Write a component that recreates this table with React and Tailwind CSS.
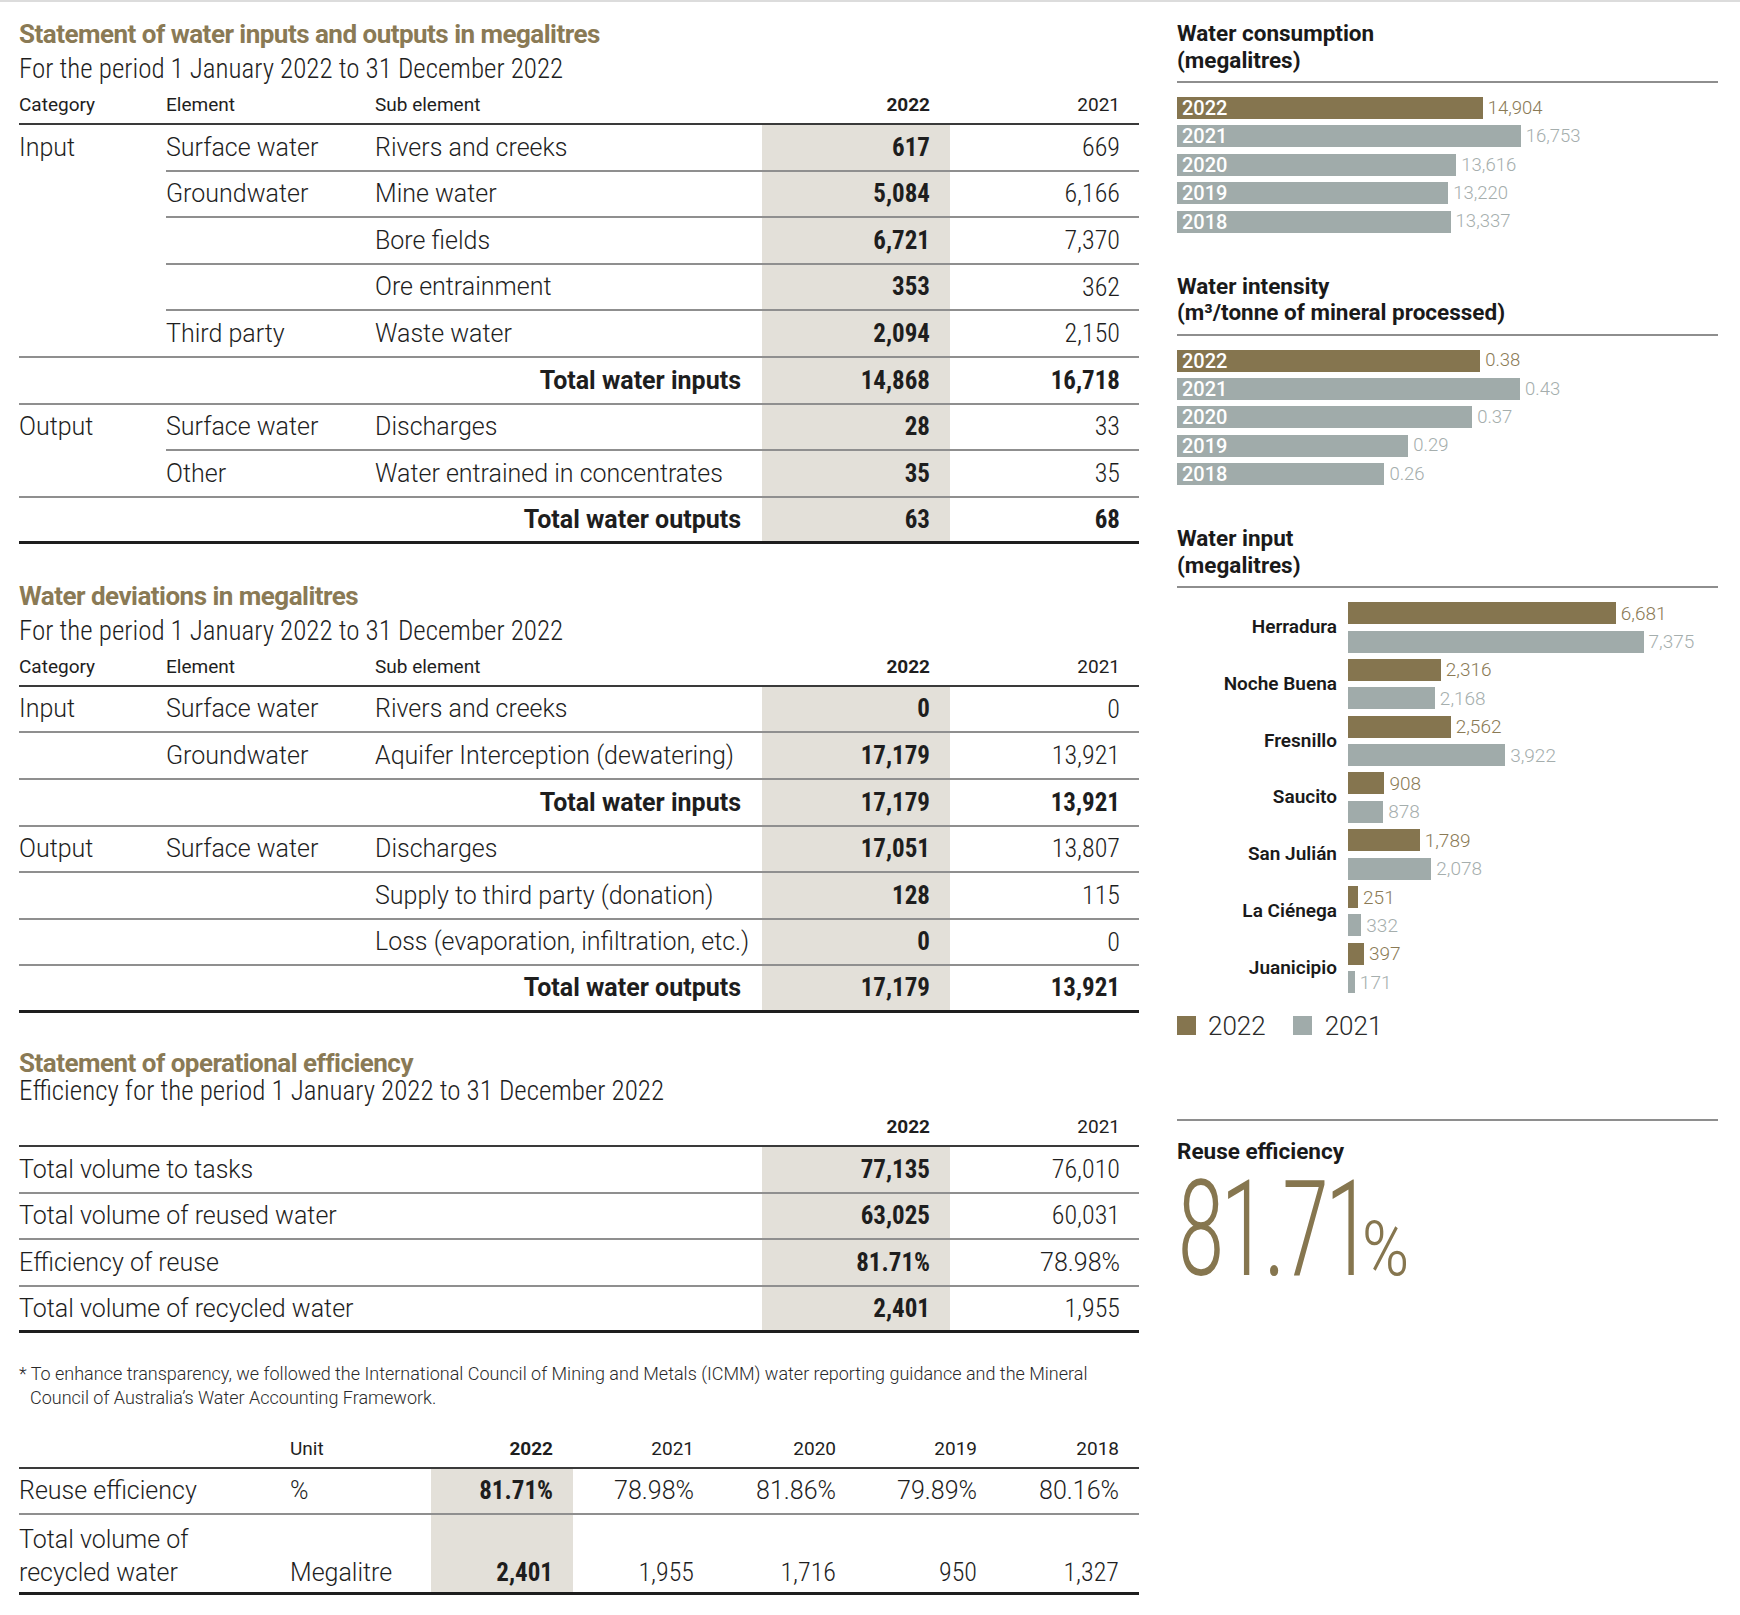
const flowRows = [
  { cat: "Input", el: "Surface water", sub: "Rivers and creeks", a: "617", b: "669", line: "part" },
  { el: "Groundwater", sub: "Mine water", a: "5,084", b: "6,166", line: "part" },
  { sub: "Bore fields", a: "6,721", b: "7,370", line: "part" },
  { sub: "Ore entrainment", a: "353", b: "362", line: "part" },
  { el: "Third party", sub: "Waste water", a: "2,094", b: "2,150", line: "full" },
  { total: "Total water inputs", a: "14,868", b: "16,718", line: "full" },
  { cat: "Output", el: "Surface water", sub: "Discharges", a: "28", b: "33", line: "part" },
  { el: "Other", sub: "Water entrained in concentrates", a: "35", b: "35", line: "full" },
  { total: "Total water outputs", a: "63", b: "68", line: "end" },
];

const deviationRows = [
  { cat: "Input", el: "Surface water", sub: "Rivers and creeks", a: "0", b: "0", line: "full" },
  { el: "Groundwater", sub: "Aquifer Interception (dewatering)", a: "17,179", b: "13,921", line: "full" },
  { total: "Total water inputs", a: "17,179", b: "13,921", line: "full" },
  { cat: "Output", el: "Surface water", sub: "Discharges", a: "17,051", b: "13,807", line: "full" },
  { sub: "Supply to third party (donation)", a: "128", b: "115", line: "full" },
  { sub: "Loss (evaporation, infiltration, etc.)", a: "0", b: "0", line: "full" },
  { total: "Total water outputs", a: "17,179", b: "13,921", line: "end" },
];

const efficiencyRows = [
  ["Total volume to tasks", "77,135", "76,010"],
  ["Total volume of reused water", "63,025", "60,031"],
  ["Efficiency of reuse", "81.71%", "78.98%"],
  ["Total volume of recycled water", "2,401", "1,955", true],
];

const consumption = [
  { year: "2022", value: 14904, label: "14,904" },
  { year: "2021", value: 16753, label: "16,753" },
  { year: "2020", value: 13616, label: "13,616" },
  { year: "2019", value: 13220, label: "13,220" },
  { year: "2018", value: 13337, label: "13,337" },
];

const intensity = [
  { year: "2022", value: 0.38, label: "0.38" },
  { year: "2021", value: 0.43, label: "0.43" },
  { year: "2020", value: 0.37, label: "0.37" },
  { year: "2019", value: 0.29, label: "0.29" },
  { year: "2018", value: 0.26, label: "0.26" },
];

const sites = [
  ["Herradura", 6681, 7375],
  ["Noche Buena", 2316, 2168],
  ["Fresnillo", 2562, 3922],
  ["Saucito", 908, 878],
  ["San Julián", 1789, 2078],
  ["La Ciénega", 251, 332],
  ["Juanicipio", 397, 171],
];

const fmt = (n) => n.toLocaleString("en-US");

// light figures: digits look condensed, percentages keep normal width
const lightNum = (v) => (v.includes("%") ? "text-[25px] font-light" : "text-[26px] font-light font-stretch-semi-condensed");
const boldNum = "text-[25px] font-bold font-stretch-semi-condensed";

function SectionTitle({ title, sub, tight }) {
  return (
    <div>
      <div className={`${tight ? "leading-[28px]" : "leading-[30px]"} text-[26px] font-bold tracking-[-0.02em] text-[#8a7a55]`}>{title}</div>
      <div className={`${tight ? "leading-[28px]" : "mt-[5px] leading-[30px]"} text-[27px] font-light font-stretch-semi-condensed text-[#1e1e1e]`}>{sub}</div>
    </div>
  );
}

function FlowHead() {
  return (
    <div className="grid grid-cols-[147px_209px_387px_188px_189px] text-[19px] leading-[24px] text-[#1e1e1e]">
      <div className="h-[41px] flex items-end pb-[6px] border-b-2 border-[#3a3a3a]">Category</div>
      <div className="h-[41px] flex items-end pb-[6px] border-b-2 border-[#3a3a3a]">Element</div>
      <div className="h-[41px] flex items-end pb-[6px] border-b-2 border-[#3a3a3a]">Sub element</div>
      <div className="h-[41px] flex items-end justify-end pb-[6px] pr-[20px] font-bold border-b-2 border-[#3a3a3a]">2022</div>
      <div className="h-[41px] flex items-end justify-end pb-[6px] pr-[19px] border-b-2 border-[#3a3a3a]">2021</div>
    </div>
  );
}

function FlowRow({ r }) {
  const line = r.line === "end" ? "border-b-[3px] border-[#1e1e1e]" : "border-b-2 border-[#8f8f8f]";
  const catLine = r.line === "part" ? "border-b-2 border-transparent" : line;
  const cell = "h-[46.6px] flex items-center";
  return (
    <div className="grid grid-cols-[147px_209px_387px_188px_189px] text-[25px] text-[#1e1e1e]">
      {r.total ? (
        <div className={`${cell} ${line} col-span-3 justify-end pr-[21px] font-bold`}>{r.total}</div>
      ) : (
        <>
          <div className={`${cell} ${catLine} font-light`}>{r.cat}</div>
          <div className={`${cell} ${line} font-light`}>{r.el}</div>
          <div className={`${cell} ${line} font-light`}>{r.sub}</div>
        </>
      )}
      <div className={`${cell} ${line} justify-end pr-[20px] bg-[#e3e0d9] ${boldNum}`}>{r.a}</div>
      <div className={`${cell} ${line} justify-end pr-[19px] ${r.total ? boldNum : lightNum(r.b)}`}>{r.b}</div>
    </div>
  );
}

function YearBars({ rows, scale }) {
  return (
    <div className="mt-[14px] flex flex-col gap-[6.4px]">
      {rows.map((r, i) => (
        <div key={r.year} className="h-[22px] flex items-center">
          <div
            className={`h-full flex items-center pl-[5px] text-[20px] font-medium leading-none text-white ${i === 0 ? "bg-[#85754f]" : "bg-[#a0abaa]"}`}
            style={{ width: r.value * scale }}
          >
            {r.year}
          </div>
          <span className={`ml-[5px] text-[18.5px] font-light leading-none ${i === 0 ? "text-[#8a7a55]" : "text-[#a5aead]"}`}>{r.label}</span>
        </div>
      ))}
    </div>
  );
}

function ChartHead({ children, first }) {
  return (
    <div className={first ? "" : "mt-[40px]"}>
      <div className="text-[22.5px] font-bold leading-[26.5px] text-[#1a1a1a]">{children}</div>
      <div className="mt-[8px] h-[2px] bg-[#8e8e8e]" />
    </div>
  );
}

export default function App() {
  return (
    <div className="w-[1740px] min-h-[1615px] bg-white font-['Roboto',_sans-serif] text-[#1e1e1e]">
      <div className="h-[2px] bg-[#dcdcdc]" />
      <div className="flex gap-[38px] pl-[19px]">
        {/* left: statements */}
        <div className="w-[1120px] pt-[17px]">
          <SectionTitle title="Statement of water inputs and outputs in megalitres" sub="For the period 1 January 2022 to 31 December 2022" />
          <FlowHead />
          {flowRows.map((r, i) => (
            <FlowRow key={i} r={r} />
          ))}

          <div className="mt-[36.5px]">
            <SectionTitle title="Water deviations in megalitres" sub="For the period 1 January 2022 to 31 December 2022" />
            <FlowHead />
            {deviationRows.map((r, i) => (
              <FlowRow key={i} r={r} />
            ))}
          </div>

          <div className="mt-[36px]">
            <SectionTitle tight title="Statement of operational efficiency" sub="Efficiency for the period 1 January 2022 to 31 December 2022" />
            <div className="grid grid-cols-[743px_188px_189px] text-[19px] leading-[24px]">
              <div className="h-[42px] border-b-2 border-[#3a3a3a]" />
              <div className="h-[42px] flex items-end justify-end pb-[6px] pr-[20px] font-bold border-b-2 border-[#3a3a3a]">2022</div>
              <div className="h-[42px] flex items-end justify-end pb-[6px] pr-[19px] border-b-2 border-[#3a3a3a]">2021</div>
            </div>
            {efficiencyRows.map(([label, a, b, last]) => {
              const line = last ? "border-b-[3px] border-[#1e1e1e]" : "border-b-2 border-[#8f8f8f]";
              return (
                <div key={label} className="grid grid-cols-[743px_188px_189px] text-[25px]">
                  <div className={`h-[46.6px] flex items-center font-light ${line}`}>{label}</div>
                  <div className={`h-[46.6px] flex items-center justify-end pr-[20px] bg-[#e3e0d9] ${boldNum} ${line}`}>{a}</div>
                  <div className={`h-[46.6px] flex items-center justify-end pr-[19px] ${lightNum(b)} ${line}`}>{b}</div>
                </div>
              );
            })}
          </div>

          <p className="mt-[29px] pl-[11px] -indent-[11px] text-[18px] leading-[24px] font-light text-[#2a2a2a]">
            * To enhance transparency, we followed the International Council of Mining and Metals (ICMM) water reporting guidance and the Mineral
            <br />
            Council of Australia’s Water Accounting Framework.
          </p>

          <div className="mt-[17.5px]">
            <div className="grid grid-cols-[271px_141px_142px_141px_142px_141px_142px] text-[19px] leading-[24px]">
              <div className="h-[41px] border-b-2 border-[#3a3a3a]" />
              <div className="h-[41px] flex items-end pb-[6px] border-b-2 border-[#3a3a3a]">Unit</div>
              <div className="h-[41px] flex items-end justify-end pb-[6px] pr-[20px] font-bold border-b-2 border-[#3a3a3a]">2022</div>
              {["2021", "2020", "2019", "2018"].map((y) => (
                <div key={y} className="h-[41px] flex items-end justify-end pb-[6px] pr-[20px] border-b-2 border-[#3a3a3a]">{y}</div>
              ))}
            </div>
            <div className="grid grid-cols-[271px_141px_142px_141px_142px_141px_142px] text-[25px]">
              <div className="h-[46.6px] flex items-center font-light border-b-2 border-[#8f8f8f]">Reuse efficiency</div>
              <div className="h-[46.6px] flex items-center font-light border-b-2 border-[#8f8f8f]">%</div>
              <div className={`h-[46.6px] flex items-center justify-end pr-[20px] bg-[#e3e0d9] ${boldNum} border-b-2 border-[#8f8f8f]`}>81.71%</div>
              {["78.98%", "81.86%", "79.89%", "80.16%"].map((v) => (
                <div key={v} className={`h-[46.6px] flex items-center justify-end pr-[20px] ${lightNum(v)} border-b-2 border-[#8f8f8f]`}>{v}</div>
              ))}
            </div>
            <div className="grid grid-cols-[271px_141px_142px_141px_142px_141px_142px] text-[25px] leading-[33px]">
              <div className="h-[80px] pt-[8px] font-light border-b-[3px] border-[#1e1e1e]">
                Total volume of
                <br />
                recycled water
              </div>
              <div className="h-[80px] flex items-end pb-[3px] font-light border-b-[3px] border-[#1e1e1e]">Megalitre</div>
              <div className={`h-[80px] flex items-end justify-end pb-[3px] pr-[20px] bg-[#e3e0d9] ${boldNum} border-b-[3px] border-[#1e1e1e]`}>2,401</div>
              {["1,955", "1,716", "950", "1,327"].map((v) => (
                <div key={v} className={`h-[80px] flex items-end justify-end pb-[3px] pr-[20px] ${lightNum(v)} border-b-[3px] border-[#1e1e1e]`}>{v}</div>
              ))}
            </div>
          </div>
        </div>

        {/* right: charts */}
        <div className="w-[541px] pt-[18px]">
          <ChartHead first>
            Water consumption
            <br />
            (megalitres)
          </ChartHead>
          <YearBars rows={consumption} scale={0.020516} />

          <ChartHead>
            Water intensity
            <br />
            (m³/tonne of mineral processed)
          </ChartHead>
          <YearBars rows={intensity} scale={797.7} />

          <ChartHead>
            Water input
            <br />
            (megalitres)
          </ChartHead>
          <div className="mt-[14px] flex flex-col gap-[6.4px]">
            {sites.map(([name, a, b]) => (
              <div key={name} className="grid grid-cols-[160px_1fr] gap-x-[11px]">
                <div className="flex items-center justify-end text-[19px] font-semibold text-[#1a1a1a]">{name}</div>
                <div className="flex flex-col gap-[6.4px]">
                  <div className="h-[22px] flex items-center">
                    <div className="h-full bg-[#85754f]" style={{ width: a * 0.04007 }} />
                    <span className="ml-[5px] text-[19px] font-light leading-none text-[#8a7a55]">{fmt(a)}</span>
                  </div>
                  <div className="h-[22px] flex items-center">
                    <div className="h-full bg-[#a0abaa]" style={{ width: b * 0.04007 }} />
                    <span className="ml-[5px] text-[19px] font-light leading-none text-[#a5aead]">{fmt(b)}</span>
                  </div>
                </div>
              </div>
            ))}
          </div>

          <div className="mt-[19.5px] flex items-center text-[26px] font-light leading-none text-[#2a2a2a]">
            <span className="w-[19px] h-[19px] bg-[#85754f]" />
            <span className="ml-[12px]">2022</span>
            <span className="ml-[27px] w-[19px] h-[19px] bg-[#a0abaa]" />
            <span className="ml-[13px]">2021</span>
          </div>

          <div className="mt-[80px] h-[2px] bg-[#8e8e8e]" />
          <div className="mt-[19.5px] text-[22.5px] font-bold leading-[22px] text-[#1a1a1a]">Reuse efficiency</div>
          <div className="mt-[18px] flex items-baseline whitespace-nowrap leading-[100px] text-[#86764f] font-light">
            <span className="inline-block origin-left scale-x-[0.74] -mr-[73px] text-[133px] font-stretch-condensed tracking-[-0.05em]">81.71</span>
            <span className="text-[76px] font-stretch-condensed">%</span>
          </div>
        </div>
      </div>
    </div>
  );
}
